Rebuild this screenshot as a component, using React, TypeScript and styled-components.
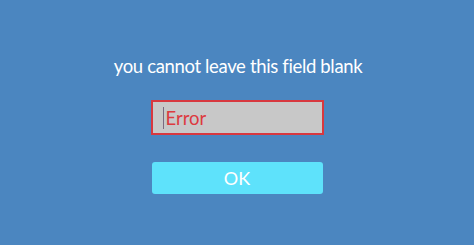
import React from "react";
import styled, { createGlobalStyle } from "styled-components";

const Global = createGlobalStyle`
  html, body { margin: 0; padding: 0; background: #4b86c0; }
  body { font-family: Lato, "Open Sans", sans-serif; }
`;

const Page = styled.div`
  width: 474px;
  height: 245px;
  background: #4b86c0;
  display: flex;
  flex-direction: column;
  align-items: center;
  box-sizing: border-box;
  padding-top: 52px;
`;

const Title = styled.div`
  color: #ffffff;
  font-size: 18.5px;
  letter-spacing: -0.35px;
  line-height: 28px;
  margin-left: 2px;
`;

const Field = styled.div`
  margin-top: 20px;
  width: 173px;
  height: 35px;
  box-sizing: border-box;
  background: #c8c8c8;
  border: 2px solid #d8383f;
  display: flex;
  align-items: center;
  padding-left: 10px;
  gap: 2px;
`;

const Caret = styled.span`
  width: 1px;
  height: 22px;
  background: #7a6a80;
`;

const FieldText = styled.span`
  color: #dd3a3f;
  font-size: 18.5px;
  line-height: 24px;
`;

const Button = styled.div`
  margin-top: 27px;
  width: 171px;
  height: 32px;
  border-radius: 3px;
  background: #5ee2fb;
  color: #ffffff;
  font-size: 18px;
  display: flex;
  align-items: center;
  justify-content: center;
`;

export default function App() {
  return (
    <>
      <Global />
      <Page>
        <Title>you cannot leave this field blank</Title>
        <Field>
          <Caret />
          <FieldText>Error</FieldText>
        </Field>
        <Button>OK</Button>
      </Page>
    </>
  );
}
